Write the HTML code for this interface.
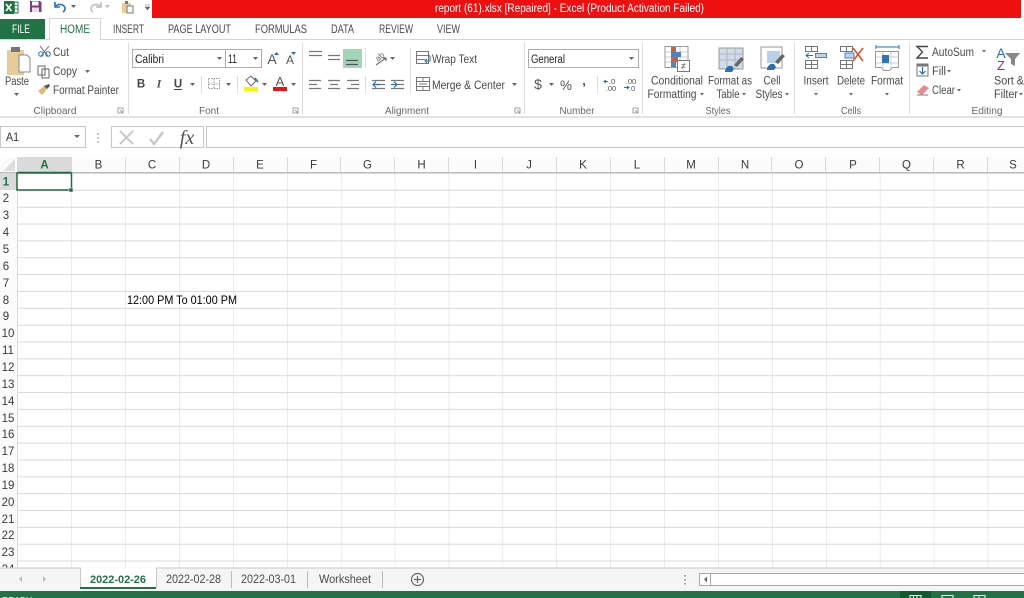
<!DOCTYPE html>
<html><head><meta charset="utf-8"><title>report (61).xlsx</title>
<style>
html,body{margin:0;padding:0;background:#fff;width:1024px;height:598px;overflow:hidden}
svg{display:block;font-family:"Liberation Sans",sans-serif;filter:blur(.25px)}
text{fill:#4a4a4a;font-size:11.5px}
.c{text-anchor:middle}
.g{fill:#666;font-size:10.5px}
.h{fill:#3a3a3a;font-size:11.5px;text-anchor:middle}
.d{fill:#666}
</style></head><body>
<svg width="1024" height="598" viewBox="0 0 1024 598" xmlns="http://www.w3.org/2000/svg">
<defs>
<pattern id="grid" x="17.5" y="173" width="53.9" height="16.85" patternUnits="userSpaceOnUse">
<path d="M0 0V17M0 .5H54" fill="none" stroke="#d8d8d8" stroke-width="1"/>
</pattern>
</defs>
<rect width="1024" height="598" fill="#fff"/>

<!-- title bar -->
<rect x="152" y="0" width="869" height="18" fill="#ec1010"/>
<text x="435" y="12" textLength="269" lengthAdjust="spacingAndGlyphs" style="fill:#fff;font-size:11.5px">report (61).xlsx [Repaired] -  Excel (Product Activation Failed)</text>

<!-- QAT -->
<path d="M11 2h7v11h-7" fill="#fff" stroke="#217346"/><path d="M11 5.500h7M11 9h7M14.500 2v11" stroke="#217346" stroke-width=".8"/>
<rect x="4" y="1" width="10" height="13" fill="#217346"/>
<path d="M6 4l5.500 7M11.500 4l-5.500 7" stroke="#fff" stroke-width="1.600"/>
<path d="M30 1h10l1.500 1.500V12H30z" fill="#80397b"/><rect x="32" y="1.500" width="6.500" height="4" fill="#fff"/><rect x="32" y="7.500" width="7" height="4.500" fill="#e6dbe6"/>
<path d="M55 2v5h5" fill="none" stroke="#2a6fb0" stroke-width="1.600"/><path d="M55 7c3-4 9-3 10 1 .4 2-.6 3-2 4" fill="none" stroke="#2a6fb0" stroke-width="1.600"/>
<path d="M71 5h5l-2.500 3z" class="d"/>
<path d="M101 2v5h-5" fill="none" stroke="#bbb" stroke-width="1.500"/><path d="M101 7c-3-4-9-3-10 1-.4 2 .6 3 2 4" fill="none" stroke="#bbb" stroke-width="1.500"/>
<path d="M105 5h5l-2.500 3z" fill="#bbb"/>
<rect x="122" y="3" width="9" height="10" fill="#e8cb97"/><rect x="125" y="1" width="3" height="3" fill="#777"/><path d="M127 6h6v7h-6z" fill="#fff" stroke="#777"/>
<path d="M145 5h5M145 7h5l-2.500 3z" fill="#666" stroke="#666" stroke-width=".5"/>

<!-- tabs -->
<rect x="0" y="19" width="45" height="21" fill="#217346"/>
<text x="21" y="33" class="c" textLength="18" lengthAdjust="spacingAndGlyphs" style="fill:#fff;font-size:11.500px">FILE</text>
<path d="M0 39.500H49.500V18.500H100.500V39.500H1024" fill="none" stroke="#d4d4d4"/>
<text x="60" y="33" textLength="30" lengthAdjust="spacingAndGlyphs" style="fill:#217346">HOME</text>
<text x="113" y="33" textLength="31" lengthAdjust="spacingAndGlyphs">INSERT</text>
<text x="168" y="33" textLength="63" lengthAdjust="spacingAndGlyphs">PAGE LAYOUT</text>
<text x="255" y="33" textLength="52" lengthAdjust="spacingAndGlyphs">FORMULAS</text>
<text x="331" y="33" textLength="23" lengthAdjust="spacingAndGlyphs">DATA</text>
<text x="379" y="33" textLength="34" lengthAdjust="spacingAndGlyphs">REVIEW</text>
<text x="437" y="33" textLength="23" lengthAdjust="spacingAndGlyphs">VIEW</text>

<!-- ribbon -->
<path d="M0 117H1024" stroke="#d8d8d8" stroke-width="1.500"/>
<g stroke="#dcdcdc"><path d="M128.500 43V114M302.500 43V114M524.500 43V114M642.500 43V114M794.500 43V114M909.500 43V114M201.500 76V93M237.500 76V93M365.500 48V68M365.500 76V93M410.500 48V93M597.500 76V93"/></g>

<!-- clipboard -->
<path d="M7 50h17v25H7z" fill="#e8cb97"/><rect x="11" y="47" width="9" height="5" fill="#777"/>
<path d="M19 55h8l3 3v14H19z" fill="#fff" stroke="#888"/>
<text x="17" y="85" class="c" textLength="24" lengthAdjust="spacingAndGlyphs">Paste</text>
<path d="M14 93h5l-2.500 3z" class="d"/>
<path d="M40 46l8 10M49 46l-8 10" stroke="#666" fill="none"/><circle cx="41" cy="54" r="2.300" fill="none" stroke="#2a6fb0"/><circle cx="48" cy="54" r="2.300" fill="none" stroke="#2a6fb0"/>
<text x="53" y="56" textLength="16" lengthAdjust="spacingAndGlyphs">Cut</text>
<path d="M38 66h7v9h-7zM42 69h7v9h-7z" fill="#fff" stroke="#666"/>
<text x="53" y="75" textLength="24" lengthAdjust="spacingAndGlyphs">Copy</text>
<path d="M85 70h5l-2.500 3z" class="d"/>
<path d="M38 91l6-5 3 3-5 6z" fill="#e2b96f"/><path d="M44 86l5-2 1 2-3 3z" fill="#555"/>
<text x="53" y="94" textLength="66" lengthAdjust="spacingAndGlyphs">Format Painter</text>
<text x="55" y="114" class="c g" textLength="43" lengthAdjust="spacingAndGlyphs">Clipboard</text>
<path d="M118 108h5v5h-5zM120 110l3 3" fill="none" stroke="#888" stroke-width=".8"/>

<!-- font -->
<rect x="132.500" y="49.500" width="129" height="18" fill="#fff" stroke="#ababab"/>
<path d="M225.500 50V67" stroke="#ababab"/>
<text x="135" y="63" textLength="29" lengthAdjust="spacingAndGlyphs" style="fill:#222">Calibri</text>
<text x="228" y="63" textLength="9" lengthAdjust="spacingAndGlyphs" style="fill:#222">11</text>
<path d="M217 57h5l-2.500 3zM253 57h5l-2.500 3z" class="d"/>
<text x="272" y="64" class="c" style="font-size:14px;fill:#555">A</text>
<path d="M274 55h5l-2.500-3z" fill="#2a6fb0"/>
<text x="290" y="64" class="c" style="font-size:12px;fill:#555">A</text>
<path d="M291 52h5l-2.500 3z" fill="#2a6fb0"/>
<text x="141" y="87.500" class="c" style="font-size:11.500px;font-weight:bold;fill:#444">B</text>
<text x="159" y="87.500" class="c" style="font-size:12px;font-style:italic;font-weight:bold;font-family:'Liberation Serif',serif;fill:#555">I</text>
<text x="178" y="87.500" class="c" style="font-size:11.500px;font-weight:bold;fill:#444">U</text>
<path d="M174 89.500h8" stroke="#444"/>
<path d="M190 83h5l-2.500 3zM226 83h5l-2.500 3zM262 83h5l-2.500 3zM291 83h5l-2.500 3z" class="d"/>
<rect x="208.500" y="78.500" width="11" height="10" fill="none" stroke="#999" stroke-dasharray="1.500 1"/><path d="M214 79v10M209 84h11" stroke="#999" stroke-dasharray="1.500 1"/>
<path d="M246 80l5-4 5 5-5 5z" fill="#fff" stroke="#666"/><path d="M255 78l3 4" stroke="#2a6fb0" stroke-width="1.500"/>
<rect x="244" y="87" width="14" height="4" fill="#fcf400"/>
<text x="280" y="86" class="c" style="font-size:13px;fill:#555">A</text>
<rect x="273" y="87" width="14" height="4" fill="#ee1111"/>
<text x="209" y="114" class="c g" textLength="20" lengthAdjust="spacingAndGlyphs">Font</text>
<path d="M293 108h5v5h-5zM295 110l3 3" fill="none" stroke="#888" stroke-width=".8"/>

<!-- alignment -->
<path d="M309 51.500h13M309 55.500h13M328 55.500h12M328 59.500h12" stroke="#777" stroke-width="1.200"/>
<rect x="343" y="49" width="19" height="19" fill="#a0d5b8"/>
<path d="M346 60.500h12M346 64.500h12" stroke="#555" stroke-width="1.200"/>
<text x="378" y="62" transform="rotate(-40 378 62)" style="font-size:8.500px;fill:#666">ab</text>
<path d="M376 65l10-7m-3 0l3 0 0 3" fill="none" stroke="#555"/>
<path d="M390 57h5l-2.500 3z" class="d"/>
<path d="M309 80.500h12M309 84.500h8M309 88.500h12M328 80.500h12M330 84.500h8M328 88.500h12M347 80.500h12M351 84.500h8M347 88.500h12" stroke="#777" stroke-width="1.200"/>
<path d="M372 80.500h13M377 84.500h8M372 88.500h13M391 80.500h13M396 84.500h8M391 88.500h13" stroke="#777" stroke-width="1.200"/>
<path d="M380 84.500h-7m3-3l-3 3 3 3M391 84.500h6m-3-3l3 3-3 3" fill="none" stroke="#2a6fb0" stroke-width="1.200"/>
<rect x="416.500" y="51.500" width="12" height="12" fill="#fff" stroke="#777"/><path d="M417 55.500h13M417 59.500h8" stroke="#4a86c0"/><path d="M430 56v5h-5m2-2l-2 2 2 2" fill="none" stroke="#2a6fb0"/>
<text x="432" y="63" textLength="45" lengthAdjust="spacingAndGlyphs">Wrap Text</text>
<rect x="416.500" y="77.500" width="13" height="13" fill="#fff" stroke="#777"/><path d="M417 81.500h12M417 86.500h12M423 78v3M423 87v3M419 84h8" stroke="#777" stroke-width=".9"/>
<text x="432" y="89" textLength="73" lengthAdjust="spacingAndGlyphs">Merge &amp; Center</text>
<path d="M512 83h5l-2.500 3z" class="d"/>
<text x="407" y="114" class="c g" textLength="44" lengthAdjust="spacingAndGlyphs">Alignment</text>
<path d="M515 108h5v5h-5zM517 110l3 3" fill="none" stroke="#888" stroke-width=".8"/>

<!-- number -->
<rect x="528.500" y="49.500" width="110" height="18" fill="#fff" stroke="#ababab"/>
<text x="531" y="63" textLength="34" lengthAdjust="spacingAndGlyphs" style="fill:#222">General</text>
<path d="M629 57h5l-2.500 3z" class="d"/>
<text x="538" y="89" class="c" style="font-size:14px;fill:#555">$</text>
<path d="M549 83h5l-2.500 3z" class="d"/>
<text x="566" y="90" class="c" style="font-size:13.500px;fill:#555">%</text>
<text x="584" y="85" class="c" style="font-size:13px;font-weight:bold;fill:#555">,</text>
<text x="612" y="84" class="c" style="font-size:7.500px;fill:#555">.0</text>
<text x="611" y="91" class="c" style="font-size:7.500px;fill:#555">.00</text>
<path d="M606 80l-2 1.500 2 1.500M604 81.500h4" fill="none" stroke="#2a6fb0"/>
<text x="631" y="84" class="c" style="font-size:7.500px;fill:#555">.00</text>
<text x="632" y="91" class="c" style="font-size:7.500px;fill:#555">.0</text>
<path d="M627 89l2-1.500-2-1.500M629 87.500h-5" fill="none" stroke="#2a6fb0"/>
<text x="577" y="114" class="c g" textLength="35" lengthAdjust="spacingAndGlyphs">Number</text>
<path d="M633 108h5v5h-5zM635 110l3 3" fill="none" stroke="#888" stroke-width=".8"/>

<!-- styles -->
<rect x="665" y="46.500" width="23" height="21" fill="#fff" stroke="#999"/>
<path d="M665 52h23M665 57h23M665 62h23M672 47v21M680 47v21" stroke="#bbb" stroke-width=".8"/>
<rect x="671" y="47" width="5" height="5" fill="#d8583a"/><rect x="671" y="52" width="10" height="5" fill="#4a86c0"/><rect x="671" y="57" width="7" height="5" fill="#d8583a"/><rect x="671" y="62" width="5" height="5" fill="#4a86c0"/>
<rect x="677.500" y="60.500" width="12" height="11" fill="#fff" stroke="#777"/>
<text x="683.500" y="69" class="c" style="font-size:9px;fill:#444">≠</text>
<rect x="719" y="48" width="24" height="21" fill="#cfdcec" stroke="#999"/><path d="M719 54h24M719 60h24M727 48v21M735 48v21" stroke="#aaa" stroke-width=".8"/>
<path d="M725 71c1-4 4-6 7-5l2 3-2 3h-7z" fill="#2a6fb0"/><path d="M734 65l7-8 3 2-7 8z" fill="#666"/>
<rect x="761" y="47" width="21" height="21" fill="#fff" stroke="#999"/><rect x="767" y="51" width="13" height="12" fill="#b9d0e9"/>
<path d="M767 69c1-4 4-6 7-5l2 3-2 3h-7z" fill="#2a6fb0"/><path d="M775 62l7-8 3 2-7 8z" fill="#666"/>
<text x="677" y="84.500" class="c" textLength="52" lengthAdjust="spacingAndGlyphs">Conditional</text>
<text x="672" y="98" class="c" textLength="49" lengthAdjust="spacingAndGlyphs">Formatting</text>
<path d="M700 93h4l-2 2.500z" class="d"/>
<text x="730" y="84.500" class="c" textLength="44" lengthAdjust="spacingAndGlyphs">Format as</text>
<text x="728" y="98" class="c" textLength="23" lengthAdjust="spacingAndGlyphs">Table</text>
<path d="M742 93h4l-2 2.500z" class="d"/>
<text x="772" y="84.500" class="c" textLength="17" lengthAdjust="spacingAndGlyphs">Cell</text>
<text x="769" y="98" class="c" textLength="27" lengthAdjust="spacingAndGlyphs">Styles</text>
<path d="M785 93h4l-2 2.500z" class="d"/>
<text x="718" y="114" class="c g" textLength="25" lengthAdjust="spacingAndGlyphs">Styles</text>

<!-- cells -->
<path d="M805.500 46.500h12v5h-12zM811.500 47v4M805.500 60.500h12v8h-12zM811.500 61v8M805.500 64.500h12" fill="none" stroke="#777"/>
<path d="M815.500 53.500h11v4h-11z" fill="#bcd3ea" stroke="#4a86c0"/><path d="M813 55.500h-7m3-2.500l-3 2.500 3 2.500" fill="none" stroke="#2a6fb0"/>
<text x="816" y="84.500" class="c" textLength="25" lengthAdjust="spacingAndGlyphs">Insert</text>
<path d="M814 93h4l-2 2.500z" class="d"/>
<path d="M840.500 46.500h12v5h-12zM846.500 47v4M840.500 60.500h12v8h-12zM846.500 61v8M840.500 64.500h12" fill="none" stroke="#777"/>
<rect x="845" y="53" width="9" height="5" fill="#bcd3ea" stroke="#4a86c0"/>
<path d="M853 48l10 13M863 48l-10 13" stroke="#e04c2a" stroke-width="1.500"/>
<text x="851" y="84.500" class="c" textLength="28" lengthAdjust="spacingAndGlyphs">Delete</text>
<path d="M849 93h4l-2 2.500z" class="d"/>
<path d="M875.500 51.500h23v16h-6l-3 3h-6l-2-3h-6z" fill="#fff" stroke="#999"/>
<path d="M883 52v16M891 52v16M876 57h22M876 63h22" stroke="#ccc"/>
<rect x="882" y="55" width="7" height="8" fill="#2f74b5"/>
<path d="M876 47h23M876 45v4M899 45v4" stroke="#2a6fb0"/>
<text x="887" y="84.500" class="c" textLength="32" lengthAdjust="spacingAndGlyphs">Format</text>
<path d="M885 93h4l-2 2.500z" class="d"/>
<text x="851" y="114" class="c g" textLength="20" lengthAdjust="spacingAndGlyphs">Cells</text>

<!-- editing -->
<path d="M928 46.500h-11l5.500 5.500-5.500 6h11" fill="none" stroke="#444" stroke-width="1.400"/>
<text x="932" y="56" textLength="42" lengthAdjust="spacingAndGlyphs">AutoSum</text>
<path d="M982 50h4l-2 2.500z" class="d"/>
<rect x="917" y="64" width="11" height="12" fill="#fff" stroke="#777"/><path d="M917 65.500h11" stroke="#777" stroke-width="2"/><path d="M922.500 67v7m-3-3l3 3 3-3" fill="none" stroke="#2a6fb0" stroke-width="1.200"/>
<text x="932" y="75" textLength="14" lengthAdjust="spacingAndGlyphs">Fill</text>
<path d="M947 70h4l-2 2.500z" class="d"/>
<path d="M917 92l7-7 5 3-7 7z" fill="#e88a92"/><path d="M917 95h11" stroke="#777"/>
<text x="932" y="94" textLength="23" lengthAdjust="spacingAndGlyphs">Clear</text>
<path d="M957 89h4l-2 2.500z" class="d"/>
<text x="1001" y="58" class="c" style="font-size:14px;fill:#2a6fb0">A</text>
<text x="1001" y="70" class="c" style="font-size:13px;fill:#80397b">Z</text>
<path d="M1005 53h15l-5 6v7l-4-2v-5z" fill="#888"/>
<text x="994" y="84.500" textLength="30" lengthAdjust="spacingAndGlyphs">Sort &amp;</text>
<text x="994" y="98" textLength="24" lengthAdjust="spacingAndGlyphs">Filter</text>
<path d="M1019 93h4l-2 2.500z" class="d"/>
<text x="987" y="114" class="c g" textLength="31" lengthAdjust="spacingAndGlyphs">Editing</text>

<!-- formula bar -->
<rect x="0.500" y="126.500" width="85" height="21" fill="#fff" stroke="#c6c6c6"/>
<text x="6" y="141" textLength="13" lengthAdjust="spacingAndGlyphs" style="fill:#333">A1</text>
<path d="M74 135h6l-3 3z" class="d"/>
<path d="M98 133v2M98 137v2M98 141v2" stroke="#888"/>
<rect x="111.500" y="126.500" width="92" height="21" fill="#fff" stroke="#c6c6c6"/>
<path d="M120 131l13 13M133 131l-13 13" stroke="#c8c8c8" stroke-width="2"/>
<path d="M150 139l4 5 9-12" fill="none" stroke="#c8c8c8" stroke-width="2.500"/>
<text x="187" y="144" class="c" style="font-family:'Liberation Serif',serif;font-style:italic;font-size:20px;fill:#555">fx</text>
<rect x="206.500" y="126.500" width="818" height="21" fill="#fff" stroke="#c6c6c6"/>

<!-- sheet -->
<rect x="0" y="157" width="1024" height="16" fill="#fbfbfb"/>
<rect x="0" y="173" width="17" height="395" fill="#fbfbfb"/>
<rect x="17" y="173" width="1007" height="395" fill="url(#grid)"/>
<g stroke="#d8d8d8"><path d="M17.500 157V568M71.500 157V173M125.500 157V173M179.500 157V173M233.500 157V173M287.500 157V173M340.500 157V173M394.500 157V173M448.500 157V173M502.500 157V173M556.500 157V173M610.500 157V173M664.500 157V173M718.500 157V173M771.500 157V173M825.500 157V173M879.500 157V173M933.500 157V173M987.500 157V173"/></g>
<path d="M0 172.500H1024" stroke="#bcbcbc"/>
<path d="M15 159v12H3z" fill="#dedede"/>
<rect x="18" y="157" width="53" height="15" fill="#dadada"/>
<rect x="0" y="173" width="17" height="17" fill="#dadada"/>
<path d="M18 172.500H71" stroke="#217346" stroke-width="1.500"/>

<g>
<text x="44.500" y="168.500" class="h" style="fill:#217346;font-weight:bold">A</text>
<text x="98.500" y="168.500" class="h">B</text><text x="152" y="168.500" class="h">C</text><text x="206" y="168.500" class="h">D</text><text x="260" y="168.500" class="h">E</text><text x="313.500" y="168.500" class="h">F</text><text x="367.500" y="168.500" class="h">G</text><text x="421.500" y="168.500" class="h">H</text><text x="475.500" y="168.500" class="h">I</text><text x="529" y="168.500" class="h">J</text><text x="583" y="168.500" class="h">K</text><text x="637" y="168.500" class="h">L</text><text x="691" y="168.500" class="h">M</text><text x="745" y="168.500" class="h">N</text><text x="799" y="168.500" class="h">O</text><text x="853" y="168.500" class="h">P</text><text x="906.500" y="168.500" class="h">Q</text><text x="960.500" y="168.500" class="h">R</text><text x="1013" y="168.500" class="h">S</text>
</g>
<g>
<text x="6" y="185.500" class="h" style="fill:#217346;font-weight:bold">1</text>
<text x="6" y="202" class="h">2</text><text x="6" y="219" class="h">3</text><text x="6" y="236" class="h">4</text><text x="6" y="253" class="h">5</text><text x="6" y="270" class="h">6</text><text x="6" y="287" class="h">7</text><text x="6" y="304" class="h">8</text><text x="6" y="320" class="h">9</text><text x="8" y="337" class="h">10</text><text x="8" y="354" class="h">11</text><text x="8" y="371" class="h">12</text><text x="8" y="388" class="h">13</text><text x="8" y="405" class="h">14</text><text x="8" y="422" class="h">15</text><text x="8" y="438" class="h">16</text><text x="8" y="455" class="h">17</text><text x="8" y="472" class="h">18</text><text x="8" y="489" class="h">19</text><text x="8" y="506" class="h">20</text><text x="8" y="523" class="h">21</text><text x="8" y="539" class="h">22</text><text x="8" y="556" class="h">23</text><text x="8" y="573" class="h">24</text>
</g>

<!-- selection -->
<rect x="17" y="173" width="54.500" height="17" fill="#fff" stroke="#1f6b3f" stroke-width="1.500"/>
<rect x="69" y="188" width="4" height="4" fill="#1f6b3f" stroke="#fff" stroke-width=".5"/>
<text x="127" y="304" textLength="110" lengthAdjust="spacingAndGlyphs" style="fill:#000;font-size:12px">12:00 PM To 01:00 PM</text>

<!-- sheet tabs -->
<rect x="0" y="568" width="1024" height="23" fill="#f5f5f5"/>
<path d="M0 568H80.500V588M156.500 588V568H1024" fill="none" stroke="#c8c8c8"/>
<rect x="81" y="568" width="75" height="20" fill="#fff"/>
<path d="M80 588H156" stroke="#217346" stroke-width="2"/>
<path d="M22 576v6l-3-3zM43 576v6l3-3z" fill="#bbb"/>
<text x="90" y="583" textLength="56" lengthAdjust="spacingAndGlyphs" style="fill:#217346;font-weight:bold;font-size:11px">2022-02-26</text>
<text x="166" y="583" textLength="55" lengthAdjust="spacingAndGlyphs">2022-02-28</text>
<text x="241" y="583" textLength="55" lengthAdjust="spacingAndGlyphs">2022-03-01</text>
<text x="319" y="583" textLength="52" lengthAdjust="spacingAndGlyphs">Worksheet</text>
<path d="M231.500 571V588M307.500 571V588M382.500 571V588" stroke="#bdbdbd"/>
<circle cx="417.500" cy="579.500" r="6" fill="none" stroke="#666" stroke-width="1.200"/>
<path d="M414 579.500h7M417.500 576v7" stroke="#666" stroke-width="1.200"/>
<path d="M685 575v1.500M685 579v1.500M685 583v1.500" stroke="#888" stroke-width="1.500"/>
<rect x="699.500" y="573.500" width="11" height="12" fill="#fff" stroke="#aaa"/>
<path d="M707 576.500v6l-3-3z" fill="#666"/>
<rect x="711" y="574" width="313" height="11" fill="#fff"/>
<path d="M711 573.500H1024M711 585.500H1024" stroke="#aaa"/>

<!-- status bar -->
<rect x="0" y="591" width="1024" height="7" fill="#217346"/>
<text x="2" y="604" textLength="30" lengthAdjust="spacingAndGlyphs" style="fill:#fff;font-size:10.500px">READY</text>
<rect x="900" y="591" width="31" height="7" fill="#0e5c2f"/>
<path d="M910 595.500h11M910 598v-3M913.500 598v-3M917 598v-3M921 598v-3M942 595.500h11v3M942 595v3M974 595.500h11M974 598v-3M979 598v-3M985 598v-3" fill="none" stroke="#fff"/>
</svg>
</body></html>
